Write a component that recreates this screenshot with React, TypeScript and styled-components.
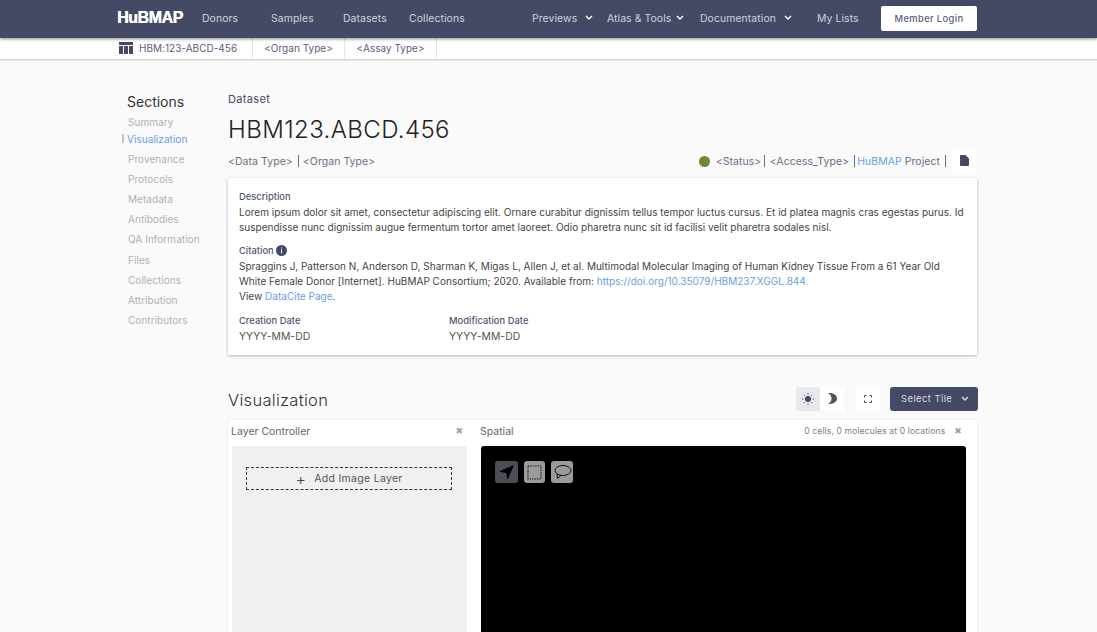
import React from "react";
import styled, { createGlobalStyle } from "styled-components";

const Global = createGlobalStyle`
  html, body { margin: 0; padding: 0; height: 632px; overflow: hidden; background: #fafafa; }
  body { font-family: Inter, "Liberation Sans", sans-serif; color: #444a65; }
  #root { height: 632px; overflow: hidden; }
  * { box-sizing: border-box; }
`;

const Header = styled.header`
  height: 38px; background: #444a65; padding: 0 0 2px 117px; display: flex; align-items: center;
  box-shadow: 0 1px 3px rgba(0,0,0,.45); position: relative; z-index: 2;
`;
const Logo = styled.div`
  width: 85px; font: 700 16px/1 "Liberation Sans", sans-serif; color: #fff; letter-spacing: -.45px;
  text-shadow: .4px 0 0 #fff; transform: scaleY(1.08); white-space: nowrap;
`;
const NavItem = styled.div<{ $w: number; $g?: number }>`
  width: ${p => p.$w}px; display: flex; align-items: center; gap: ${p => p.$g ?? 8}px;
  font-size: 10.4px; letter-spacing: .1px; color: #cfd1dc; white-space: nowrap;
`;
const LoginButton = styled.div`
  width: 96px; height: 25px; background: #fff; border-radius: 2px; color: #5a5f78;
  font-size: 9.4px; font-weight: 500; letter-spacing: .35px;
  display: flex; align-items: center; justify-content: center;
`;
const SubBar = styled.div`
  height: 22px; background: #fff; padding-left: 117px; display: flex;
  border-bottom: 1px solid #d4d4d4; box-shadow: 0 1px 1px rgba(0,0,0,.06);
`;
const SubItem = styled.div<{ $w: number; $start?: boolean }>`
  width: ${p => p.$w}px; height: 21px; padding-bottom: 1px; display: flex; align-items: center;
  justify-content: ${p => p.$start ? "flex-start" : "center"}; padding-left: ${p => p.$start ? 2 : 0}px; gap: 6px;
  border-right: 1px solid #e4e4e4; font-size: 10px; letter-spacing: .02px; color: #5a5f78; white-space: nowrap;
`;
const Body = styled.div`display: flex; padding: 33px 0 0 127px;`;
const Side = styled.nav`width: 101px; position: relative;`;
const SideTitle = styled.div`font-size: 14px; line-height: 17px; color: #333; margin-bottom: 2px;`;
const SideItem = styled.div<{ $on?: boolean; $first?: boolean }>`
  position: relative; height: ${p => p.$first ? 17 : 20.1}px; font-size: 10px; line-height: 20px; padding-left: ${p => p.$on ? 0 : 1}px;
  letter-spacing: .05px; color: ${p => p.$on ? "#6aa0e0" : "#b0b0b0"};
  ${p => p.$on && `&::before { content: ""; position: absolute; left: -5px; top: 5px; width: 2px; height: 9px; background: #c4c4c4; }`}
`;
const Main = styled.main`width: 749px; display: flex; flex-direction: column;`;
const Kicker = styled.div`font-size: 11px; line-height: 13px; font-weight: 400; color: #444a65; letter-spacing: .35px;`;
const Title = styled.h1`margin: 9px 0 0; font-size: 24px; line-height: 30px; font-weight: 300; color: #222; letter-spacing: .4px;`;
const MetaRow = styled.div`
  display: flex; align-items: center; justify-content: space-between; height: 24px; margin-top: 4px; padding-right: 1px;
  font-size: 10.5px; color: #6a6e82; letter-spacing: .05px;
`;
const MetaGroup = styled.div`display: flex; align-items: center; white-space: pre;`;
const Dot = styled.span`width: 11px; height: 11px; border-radius: 50%; background: #6c8a35; margin-right: 6px;`;
const Sep = styled.span<{ $l?: number; $r?: number }>`
  display: inline-block; width: 1px; height: 12px; background: #6a6e82;
  margin: 0 ${p => p.$r ?? 5}px 0 ${p => p.$l ?? 5}px;
`;
const Link = styled.span`color: #6aa0e0;`;
const DocButton = styled.div`
  width: 24px; height: 24px; background: #fff; border-radius: 3px; display: flex; align-items: center; justify-content: center; margin-left: 6px; padding-bottom: 2px;
`;
const Card = styled.section`
  margin-top: 5px; height: 177px; background: #fff; padding: 13px 11px 0;
  box-shadow: 0 1px 3px rgba(0,0,0,.28);
`;
const Label = styled.div`
  display: flex; align-items: center; gap: 2px; font-size: 9.3px; line-height: 12px; font-weight: 500; color: #51566f; letter-spacing: .05px;
`;
const Para = styled.p`margin: 2px 0 0; font-size: 10px; line-height: 15px; color: #444; letter-spacing: .016px; white-space: pre;`;
const Gap = styled.div`height: 9.5px;`;
const DateRow = styled.div`display: flex; margin-top: 11.5px;`;
const DateCol = styled.div`width: 210px;`;
const DateVal = styled.div`margin-top: 3px; font-size: 10.4px; line-height: 14px; color: #555; letter-spacing: .06px;`;
const VizHead = styled.div`margin-top: 27px; height: 33px; display: flex; align-items: center;`;
const VizTitle = styled.h2`margin: 0; padding-top: 3px; flex: 1; font-size: 16.5px; font-weight: 300; color: #333; letter-spacing: .3px;`;
const ToggleBox = styled.div<{ $on?: boolean }>`
  width: 24px; height: 24px; display: flex; align-items: center; justify-content: center;
  background: ${p => p.$on ? "#e8e9ee" : "#fff"};
`;
const ToggleGroup = styled.div`display: flex; margin-right: 12px; border-radius: 3px; overflow: hidden;`;
const SelectBtn = styled.div`
  margin-left: 10px; width: 88px; height: 24px; background: #444a65; border-radius: 3px; padding-left: 11px;
  margin-right: -1px; display: flex; align-items: center; gap: 9px;
  color: #dcdde5; font-size: 9.4px; font-weight: 400; letter-spacing: .45px;
`;
const Viz = styled.section`
  margin-top: 5px; height: 230px; background: #fff; display: flex; padding: 0 11px 0 4px;
  box-shadow: 0 0 2px rgba(0,0,0,.12);
`;
const LeftCol = styled.div`width: 235px; display: flex; flex-direction: column; margin-right: 14px;`;
const RightCol = styled.div`flex: 1; display: flex; flex-direction: column;`;
const PanelHead = styled.div`
  height: 26px; display: flex; align-items: center; justify-content: space-between; padding: 0 4px 4px 0; margin-left: -1px;
  font-size: 10.5px; color: #666; 
`;
const Info = styled.div`display: flex; align-items: center; gap: 9px; font-size: 8.6px; color: #808080; letter-spacing: .1px;`;
const Close = styled.span`color: #a0a0a0; font: 700 9px/1 "DejaVu Sans", sans-serif;`;
const LayerBox = styled.div`flex: 1; background: #f0f0f0; padding: 21px 15px 0 14px; border-radius: 2px 2px 0 0;`;
const AddBtn = styled.div`
  height: 23px; border: 1px dashed #333; display: flex; align-items: center; justify-content: center; gap: 8px;
  font-size: 10.5px; letter-spacing: .3px; color: #555;
`;
const Plus = styled.span`font-size: 16px; line-height: 1; color: #444; font-weight: 300;`;
const Canvas = styled.div`flex: 1; background: #000; border-radius: 3px 3px 0 0; padding: 15px 14px; display: flex; gap: 6px; align-items: flex-start;`;
const Tool = styled.div<{ $on?: boolean; $w: number }>`
  width: ${p => p.$w}px; height: 22px; border-radius: 3px; display: flex; align-items: center; justify-content: center;
  background: ${p => p.$on ? "#4a4f57" : "#9b9b9b"};
`;

const Chevron = ({ c = "#fff" }: { c?: string }) => (
  <svg width="8" height="6" viewBox="0 0 8 6"><path d="M1 1l3 3 3-3" fill="none" stroke={c} strokeWidth="1.4" /></svg>
);

const sections = ["Summary", "Visualization", "Provenance", "Protocols", "Metadata", "Antibodies", "QA Information", "Files", "Collections", "Attribution", "Contributors"];

export default function App() {
  return (
    <>
      <Global />
      <Header>
        <Logo>HuBMAP</Logo>
        <NavItem $w={69}>Donors</NavItem>
        <NavItem $w={72}>Samples</NavItem>
        <NavItem $w={66}>Datasets</NavItem>
        <NavItem $w={123}>Collections</NavItem>
        <NavItem $w={75}>Previews <Chevron /></NavItem>
        <NavItem $w={93} $g={5}><span>Atlas &amp; Tools</span><Chevron /></NavItem>
        <NavItem $w={117}>Documentation <Chevron /></NavItem>
        <NavItem $w={64}>My Lists</NavItem>
        <LoginButton>Member Login</LoginButton>
      </Header>
      <SubBar>
        <SubItem $w={136} $start>
          <svg width="14" height="12" viewBox="0 0 14 12"><path d="M0 0h14v3H0zM0 4h4v8H0zM5 4h4v8H5zM10 4h4v8h-4z" fill="#444a65" /></svg>
          HBM:123-ABCD-456
        </SubItem>
        <SubItem $w={92}>&lt;Organ Type&gt;</SubItem>
        <SubItem $w={92}>&lt;Assay Type&gt;</SubItem>
      </SubBar>
      <Body>
        <Side>
          <SideTitle>Sections</SideTitle>
          {sections.map((s, i) => <SideItem key={s} $first={i === 0} $on={s === "Visualization"}>{s}</SideItem>)}
        </Side>
        <Main>
          <Kicker>Dataset</Kicker>
          <Title>HBM123.ABCD.456</Title>
          <MetaRow>
            <MetaGroup>&lt;Data Type&gt;<Sep $r={4} />&lt;Organ Type&gt;</MetaGroup>
            <MetaGroup>
              <Dot />
              {" "}&lt;Status&gt;<Sep $l={3} $r={4} />&lt;Access_Type&gt;<Sep $r={2} /><Link>HuBMAP</Link>&nbsp;Project<Sep $r={0} />
              <DocButton>
                <svg width="9" height="11" viewBox="0 0 9 11"><path d="M0 1a1 1 0 0 1 1-1h4.500L9 3.500V10a1 1 0 0 1-1 1H1a1 1 0 0 1-1-1z" fill="#444a65" /></svg>
              </DocButton>
            </MetaGroup>
          </MetaRow>
          <Card>
            <Label>Description</Label>
            <Para>{"Lorem ipsum dolor sit amet, consectetur adipiscing elit. Ornare curabitur dignissim tellus tempor luctus cursus. Et id platea magnis cras egestas purus. Id\nsuspendisse nunc dignissim augue fermentum tortor amet laoreet. Odio pharetra nunc sit id facilisi velit pharetra sodales nisl."}</Para>
            <Gap />
            <Label>
              Citation
              <svg width="11" height="11" viewBox="0 0 11 11"><circle cx="5.500" cy="5.500" r="5.500" fill="#444a65" /><path d="M5 2.500h1v1H5zM5 4.500h1v4H5z" fill="#fff" /></svg>
            </Label>
            <Para>
              {"Spraggins J, Patterson N, Anderson D, Sharman K, Migas L, Allen J, et al. Multimodal Molecular Imaging of Human Kidney Tissue From a 61 Year Old\nWhite Female Donor [Internet]. HuBMAP Consortium; 2020. Available from: "}
              <Link>https://doi.org/10.35079/HBM237.XGGL.844.</Link>
              {"\nView "}<Link>DataCite Page</Link>.
            </Para>
            <DateRow>
              <DateCol><Label>Creation Date</Label><DateVal>YYYY-MM-DD</DateVal></DateCol>
              <DateCol><Label>Modification Date</Label><DateVal>YYYY-MM-DD</DateVal></DateCol>
            </DateRow>
          </Card>
          <VizHead>
            <VizTitle>Visualization</VizTitle>
            <ToggleGroup>
              <ToggleBox $on>
                <svg width="12" height="12" viewBox="0 0 12 12"><circle cx="6" cy="6" r="3" fill="#444a65" /><path d="M6 0v1.500M6 10.500V12M0 6h1.500M10.500 6H12M1.800 1.800l1 1M9.200 9.200l1 1M1.800 10.200l1-1M9.200 2.800l1-1" stroke="#444a65" strokeWidth=".9" /></svg>
              </ToggleBox>
              <ToggleBox>
                <svg width="9" height="11" viewBox="0 0 9 11"><path d="M0 .2C5-.6 9 2 9 5.500S5 11.600 0 10.800C2.500 9.500 3.500 7.600 3.500 5.500S2.500 1.500 0 .2z" fill="#555" /></svg>
              </ToggleBox>
            </ToggleGroup>
            <ToggleBox>
              <svg width="8" height="8" viewBox="0 0 8 8"><path d="M.5 2.500V.5h2M5.500.5h2v2M7.500 5.500v2h-2M2.500 7.500h-2v-2" fill="none" stroke="#444a65" /></svg>
            </ToggleBox>
            <SelectBtn>Select Tile <Chevron c="#dcdde5" /></SelectBtn>
          </VizHead>
          <Viz>
            <LeftCol>
              <PanelHead>Layer Controller <Close>✖</Close></PanelHead>
              <LayerBox>
                <AddBtn><Plus>+</Plus>Add Image Layer</AddBtn>
              </LayerBox>
            </LeftCol>
            <RightCol>
              <PanelHead>Spatial <Info>0 cells, 0 molecules at 0 locations <Close>✖</Close></Info></PanelHead>
              <Canvas>
                <Tool $on $w={23}>
                  <svg width="17" height="17" viewBox="0 0 17 17"><path d="M16 1L1 7.500 8 9l1.500 7z" fill="#000" /></svg>
                </Tool>
                <Tool $w={21}>
                  <svg width="15" height="15" viewBox="0 0 15 15"><rect x="1" y="1" width="13" height="13" fill="none" stroke="#111" strokeDasharray="1.300 1.100" strokeWidth="1.100" /></svg>
                </Tool>
                <Tool $w={22}>
                  <svg width="19" height="16" viewBox="0 0 19 16"><ellipse cx="10" cy="6.500" rx="8" ry="5" fill="none" stroke="#111" /><path d="M4 10l.5 4.500L8 11.300" fill="none" stroke="#111" /></svg>
                </Tool>
              </Canvas>
            </RightCol>
          </Viz>
        </Main>
      </Body>
    </>
  );
}
